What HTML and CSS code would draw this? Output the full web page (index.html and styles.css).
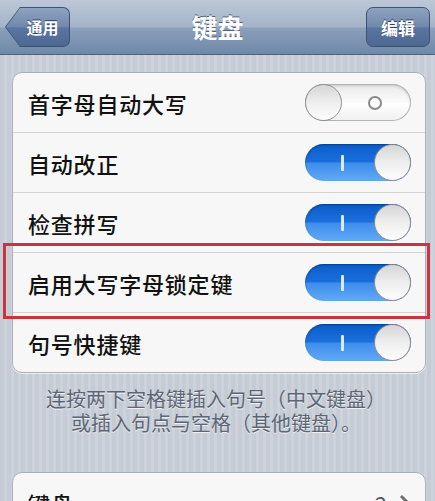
FILE: index.html
```html
<!DOCTYPE html>
<html lang="zh-CN">
<head>
<meta charset="utf-8">
<title>键盘</title>
<link rel="stylesheet" href="styles.css">
</head>
<body>
<header class="navbar">
  <div class="back"><div class="back-inner">通用</div></div>
  <h1 class="title">键盘</h1>
  <div class="edit">编辑</div>
</header>
<main class="content">
  <section class="card">
    <div class="row"><span class="label">首字母自动大写</span><div class="switch off"><span class="knob"></span><span class="ring"></span></div></div>
    <div class="row"><span class="label">自动改正</span><div class="switch on"><span class="bar"></span><span class="knob"></span></div></div>
    <div class="row"><span class="label">检查拼写</span><div class="switch on"><span class="bar"></span><span class="knob"></span></div></div>
    <div class="row highlight"><span class="label">启用大写字母锁定键</span><div class="switch on"><span class="bar"></span><span class="knob"></span></div></div>
    <div class="row"><span class="label">句号快捷键</span><div class="switch on"><span class="bar"></span><span class="knob"></span></div></div>
  </section>
  <p class="note"><span>连按两下空格键插入句号（中文键盘）</span><span>或插入句点与空格（其他键盘）。</span></p>
  <section class="card">
    <div class="row"><span class="label">键盘</span><span class="value">2<svg class="chev" width="12" height="18" viewBox="0 0 12 18"><path d="M2 2 L9 9 L2 16" fill="none" stroke="#707070" stroke-width="3"/></svg></span></div>
  </section>
</main>
</body>
</html>
```
FILE: styles.css
```css
* { box-sizing: border-box; }
html, body { margin: 0; padding: 0; }
body {
  width: 435px;
  height: 501px;
  overflow: hidden;
  font-family: "Noto Sans CJK SC", "Liberation Sans", sans-serif;
  background: repeating-linear-gradient(90deg, #c6ccd5 0 4px, #ced3db 4px 7px);
}
.navbar {
  height: 55px;
  display: grid;
  grid-template-columns: 1fr auto 1fr;
  align-items: center;
  padding: 0 5px;
  background: linear-gradient(#bcc8d7 0%, #a3b3c8 50%, #8a9fba 52%, #7089a9 100%);
  border-bottom: 1px solid #4b5e7d;
}
.back {
  justify-self: start;
  width: 65px;
  height: 40px;
  padding: 1px 1px 1px 1px;
  background: #3c5273;
  border-radius: 0 7px 7px 0;
  clip-path: polygon(15px 0, 100% 0, 100% 100%, 15px 100%, 0 50%);
  display: flex;
}
.back-inner {
  flex: 1;
  display: flex;
  align-items: center;
  justify-content: center;
  padding-left: 10px;
  background: linear-gradient(#8ea3bf 0%, #7088ab 50%, #5a75a0 52%, #4d6892 100%);
  border-radius: 0 6px 6px 0;
  clip-path: polygon(14px 0, 100% 0, 100% 100%, 14px 100%, 0 50%);
  color: #fff;
  font-size: 16px;
  font-weight: 700;
  text-shadow: 0 -1px 0 #2e4262;
}
.title {
  margin: 0;
  color: #fff;
  font-size: 26px;
  font-weight: 700;
  text-shadow: 0 -1px 0 #51627c;
  line-height: 1;
}
.edit {
  justify-self: end;
  width: 64px;
  height: 40px;
  border: 1px solid #3c5273;
  border-radius: 7px;
  background: linear-gradient(#8ea3bf 0%, #7088ab 50%, #5a75a0 52%, #4d6892 100%);
  display: flex;
  align-items: center;
  justify-content: center;
  color: #fff;
  font-size: 17px;
  font-weight: 700;
  text-shadow: 0 -1px 0 #2e4262;
}
.content {
  padding: 17px 9px 0 12px;
}
.card {
  background: #f7f7f7;
  border: 1px solid #a9afb8;
  border-radius: 10px;
  box-shadow: 0 1px 0 rgba(255,255,255,0.7);
}
.row {
  height: 60px;
  display: flex;
  align-items: center;
  justify-content: space-between;
  padding: 0 14px 0 15px;
  border-top: 1px solid #d3d3d3;
}
.row:first-child { border-top: none; height: 59px; }
.highlight { position: relative; }
.highlight::after {
  content: "";
  position: absolute;
  top: -10px;
  bottom: -7px;
  left: -10px;
  right: -5px;
  border: 3px solid #c9343f;
  pointer-events: none;
}
.label {
  color: #111;
  font-size: 22px;
  font-weight: 500;
  letter-spacing: 0.8px;
}
.switch {
  width: 106px;
  height: 37px;
  border-radius: 19px;
  display: flex;
  align-items: center;
}
.switch.on {
  background: linear-gradient(#0b5cc8 0%, #1a6fdc 48%, #3d8ded 52%, #62aaf5 100%);
  box-shadow: inset 0 1px 2px rgba(0,0,0,0.35);
}
.switch.off {
  background: linear-gradient(#e9e9e9 0%, #fbfbfb 50%, #ffffff 52%, #f0f0f0 100%);
  box-shadow: inset 0 0 0 1px #b3b3b3, inset 0 2px 3px rgba(0,0,0,0.15);
}
.knob {
  width: 37px;
  height: 37px;
  border-radius: 50%;
  border: 1px solid #8f8f8f;
  background: linear-gradient(#d6d6d6 0%, #eeeeee 50%, #fdfdfd 100%);
  flex: none;
}
.on .knob { margin-left: auto; }
.bar {
  width: 3px;
  height: 16px;
  margin-left: 36px;
  background: #d8ecff;
  border-radius: 1px;
}
.ring {
  width: 14px;
  height: 14px;
  margin-left: 26px;
  border-radius: 50%;
  border: 2px solid #8a8a8a;
}
.note {
  margin: 14px 18px 37px 12px;
  text-align: center;
  color: #5d6677;
  font-size: 20px;
  line-height: 24px;
  text-shadow: 0 1px 0 #eef0f3;
}
.note span { display: block; }
.value {
  display: flex;
  align-items: center;
  gap: 12px;
  color: #505a6e;
  font-size: 22px;
}
```
